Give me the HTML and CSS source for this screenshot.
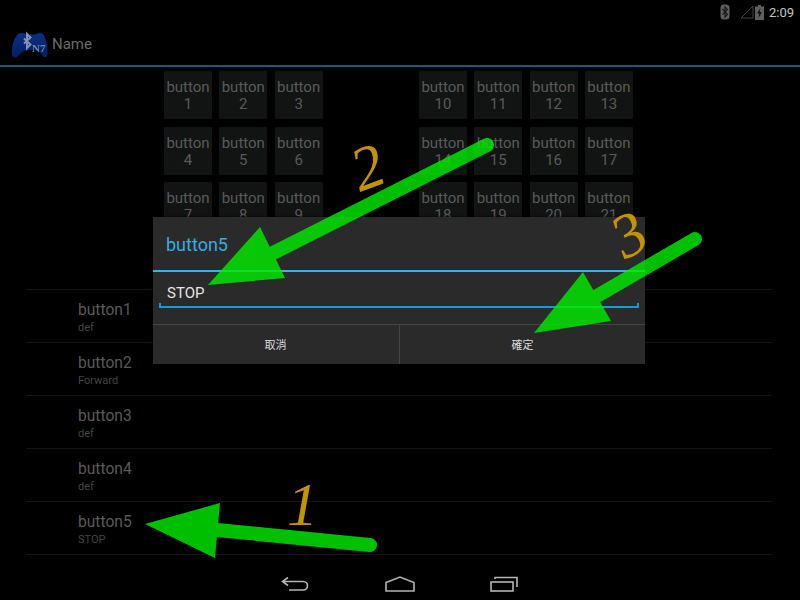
FILE: index.html
```html
<!DOCTYPE html>
<html lang="zh-Hant">
<head>
<meta charset="utf-8">
<title>Name</title>
<link rel="stylesheet" href="styles.css">
</head>
<body>
<div class="screen">
  <header class="status">
    <svg class="st-bt" width="10" height="16" viewBox="0 0 10 16"><rect x="0.5" y="0.5" width="9" height="15" rx="3.5" class="st-fill"/><path d="M2.5 5l5 5.5-2.5 2.5V3l2.5 2.5-5 5" class="st-cut"/></svg>
    <svg class="st-sig" width="14" height="14" viewBox="0 0 14 14"><path d="M1 13L13 1V13Z" class="st-line"/></svg>
    <svg class="st-bat" width="9" height="15" viewBox="0 0 9 15"><path d="M3 0h3v1.500h3V15H0V1.500h3Z" class="st-fill"/><path d="M5.500 3L2 8.500h2.200L3.500 13 7 7H4.800Z" class="st-cut-fill"/></svg>
    <span class="clock">2:09</span>
  </header>
  <div class="actionbar">
    <svg class="logo" width="38" height="28" viewBox="0 0 38 28">
      <defs><linearGradient id="pad" x1="0" y1="0" x2="0" y2="1"><stop offset="0" stop-color="#0a2f86"/><stop offset="1" stop-color="#071c66"/></linearGradient></defs>
      <path d="M7 3C10 1 13 2 16 3.500H24C27 2 30 1 32 3C35 7 37 16 36.500 24C36 27 33 27 31 24C28 20 25 19 20 19C15 19 11 20 8 24C6 27 2 28 1 24C0 16 3 7 7 3Z" fill="url(#pad)"/>
      <path d="M13 7.500l6.500 6-3.500 3.500V3l3.500 3.500-6.500 6" class="logo-bt"/>
      <text x="21" y="21" class="logo-text">N7</text>
    </svg>
    <span class="app-name">Name</span>
  </div>
  <main class="content">
    <div class="pads">
      <div class="pad-grid pad-three">
        <div class="pad">button 1</div><div class="pad">button 2</div><div class="pad">button 3</div>
        <div class="pad">button 4</div><div class="pad">button 5</div><div class="pad">button 6</div>
        <div class="pad">button 7</div><div class="pad">button 8</div><div class="pad">button 9</div>
      </div>
      <div class="pad-grid pad-four">
        <div class="pad">button 10</div><div class="pad">button 11</div><div class="pad">button 12</div><div class="pad">button 13</div>
        <div class="pad">button 14</div><div class="pad">button 15</div><div class="pad">button 16</div><div class="pad">button 17</div>
        <div class="pad">button 18</div><div class="pad">button 19</div><div class="pad">button 20</div><div class="pad">button 21</div>
      </div>
    </div>
    <ul class="list">
      <li class="row"><span class="row-title">button1</span><span class="row-sub">def</span></li>
      <li class="row"><span class="row-title">button2</span><span class="row-sub">Forward</span></li>
      <li class="row"><span class="row-title">button3</span><span class="row-sub">def</span></li>
      <li class="row"><span class="row-title">button4</span><span class="row-sub">def</span></li>
      <li class="row"><span class="row-title">button5</span><span class="row-sub">STOP</span></li>
    </ul>
  </main>
  <nav class="navbar">
    <svg width="28" height="16" viewBox="0 0 28 16"><path d="M7 1.500L1.500 5.500 7 9.500M2 5.500H22C28 5.500 28 14 22 14H8" class="nav-line"/></svg>
    <svg width="30" height="16" viewBox="0 0 30 16"><path d="M1 6.500L15 1 29 6.500V15H1Z" class="nav-line"/></svg>
    <svg width="29" height="16" viewBox="0 0 29 16"><rect x="1" y="6" width="22" height="9" class="nav-line"/><path d="M5 3V1.500H27V11" class="nav-line"/></svg>
  </nav>
  <section class="dialog">
    <h2 class="dlg-title">button5</h2>
    <div class="dlg-body">
      <div class="dlg-input">STOP</div>
    </div>
    <div class="dlg-actions">
      <button class="dlg-btn">取消</button>
      <button class="dlg-btn">確定</button>
    </div>
  </section>
  <svg class="marks" width="800" height="600" viewBox="0 0 800 600">
    <g class="arrow">
      <path d="M370 545L217 530" class="shaft"/>
      <path d="M145 524L220 503 215 558Z"/>
    </g>
    <g class="arrow">
      <path d="M487 145L273 253" class="shaft"/>
      <path d="M208 285L260 227 285 278Z"/>
    </g>
    <g class="arrow">
      <path d="M695 239L597 296" class="shaft"/>
      <path d="M534 333L583 272 611 321Z"/>
    </g>
    <text x="287" y="525" class="num">1</text>
    <text x="0" y="0" class="num" transform="translate(360 192) rotate(-20)">2</text>
    <text x="0" y="0" class="num" transform="translate(625 260) rotate(-28)">3</text>
  </svg>
</div>
</body>
</html>
```
FILE: styles.css
```css
* { box-sizing: border-box; }
html, body { margin: 0; padding: 0; background: #000; }
.screen {
  position: relative;
  width: 800px;
  height: 600px;
  overflow: hidden;
  display: flex;
  flex-direction: column;
  background: #000;
  font-family: Roboto, "Noto Sans CJK TC", sans-serif;
}
.status {
  height: 24px;
  flex: none;
  display: flex;
  align-items: center;
  justify-content: flex-end;
  padding-right: 6px;
}
.st-bt { margin-right: 10px; }
.st-sig { margin-right: 1px; }
.st-bat { margin-right: 5px; }
.st-fill { fill: #5f5f5f; }
.st-cut { fill: none; stroke: #1a1a1a; stroke-width: 1.2; }
.st-cut-fill { fill: #111; }
.st-line { fill: none; stroke: #444; stroke-width: 1; }
.clock { color: #c4c4c4; font-size: 13px; }
.actionbar {
  height: 43px;
  flex: none;
  display: flex;
  align-items: center;
  padding-left: 11px;
  padding-bottom: 2px;
  border-bottom: 2px solid #0f5f7c;
}
.logo { flex: none; margin-top: 2px; filter: blur(0.4px); }
.logo-bt { fill: none; stroke: #8791ad; stroke-width: 2; }
.logo-text { font: 700 11px "Liberation Serif", serif; fill: #76829f; }
.app-name { margin-left: 3px; color: #6a6a6a; font-size: 15px; }
.content { flex: 1; min-height: 0; display: flex; flex-direction: column; padding-top: 4px; }
.pads { display: flex; padding-left: 164px; gap: 96.4px; height: 218px; flex: none; }
.pad-grid { display: grid; gap: 7.5px 7.3px; grid-auto-rows: 48px; align-content: start; }
.pad-three { grid-template-columns: repeat(3, 48px); }
.pad-four { grid-template-columns: repeat(4, 48px); }
.pad {
  background: #111412;
  border-radius: 1px;
  color: #5a5a5a;
  font-size: 15px;
  line-height: 17px;
  text-align: center;
  padding: 8px 0 0;
}
.list {
  list-style: none;
  margin: 0 28px 0 26px;
  padding: 0;
  border-top: 1px solid #141414;
}
.row {
  height: 53px;
  display: flex;
  flex-direction: column;
  padding: 10px 0 0 52px;
  border-bottom: 1px solid #141414;
}
.row-title { color: #595959; font-size: 15.6px; line-height: 20px; }
.row-sub { color: #454545; font-size: 11px; line-height: 14px; margin-top: 1px; }
.navbar {
  height: 49px;
  flex: none;
  display: flex;
  justify-content: center;
  align-items: flex-start;
  gap: 75.500px;
  padding: 25px 0 0 0;
  margin-top: auto;
}
.nav-line { fill: none; stroke: #b4b4b4; stroke-width: 1.6; }
.dialog {
  position: absolute;
  left: 153px;
  top: 217px;
  width: 492px;
  height: 147px;
  background: #2a2a2a;
  box-shadow: 0 0 2px #000;
  display: flex;
  flex-direction: column;
}
.dlg-title {
  margin: 0;
  height: 55px;
  flex: none;
  padding: 16px 0 0 13px;
  color: #33aee0;
  font-size: 18px;
  line-height: 24px;
  font-weight: 400;
  border-bottom: 2px solid #33b5e5;
}
.dlg-body { flex: 1; padding: 11px 6px 0 6px; }
.dlg-input {
  height: 25px;
  color: #e4e4e4;
  font-size: 15px;
  line-height: 20px;
  padding-left: 6px;
  border: 2px solid #1a9bcf;
  border-top: 0;
  border-image: linear-gradient(#2a2a2a 84%, #1a9bcf 84%) 1;
}
.dlg-actions { display: flex; height: 40px; flex: none; border-top: 1px solid #454545; }
.dlg-btn {
  flex: 1;
  background: none;
  border: 0;
  padding: 0 0 2px;
  color: #dcdcdc;
  font: 11px "Noto Sans CJK TC", sans-serif;
}
.dlg-btn:first-child { border-right: 1px solid #454545; padding-right: 1px; }
.marks { position: absolute; left: 0; top: 0; }
.arrow { fill: #00ec00; opacity: 0.81; }
.shaft { fill: none; stroke: #00ec00; stroke-width: 14; stroke-linecap: round; }
.num { font: italic 62px "Liberation Serif", serif; fill: #c49206; }
```
